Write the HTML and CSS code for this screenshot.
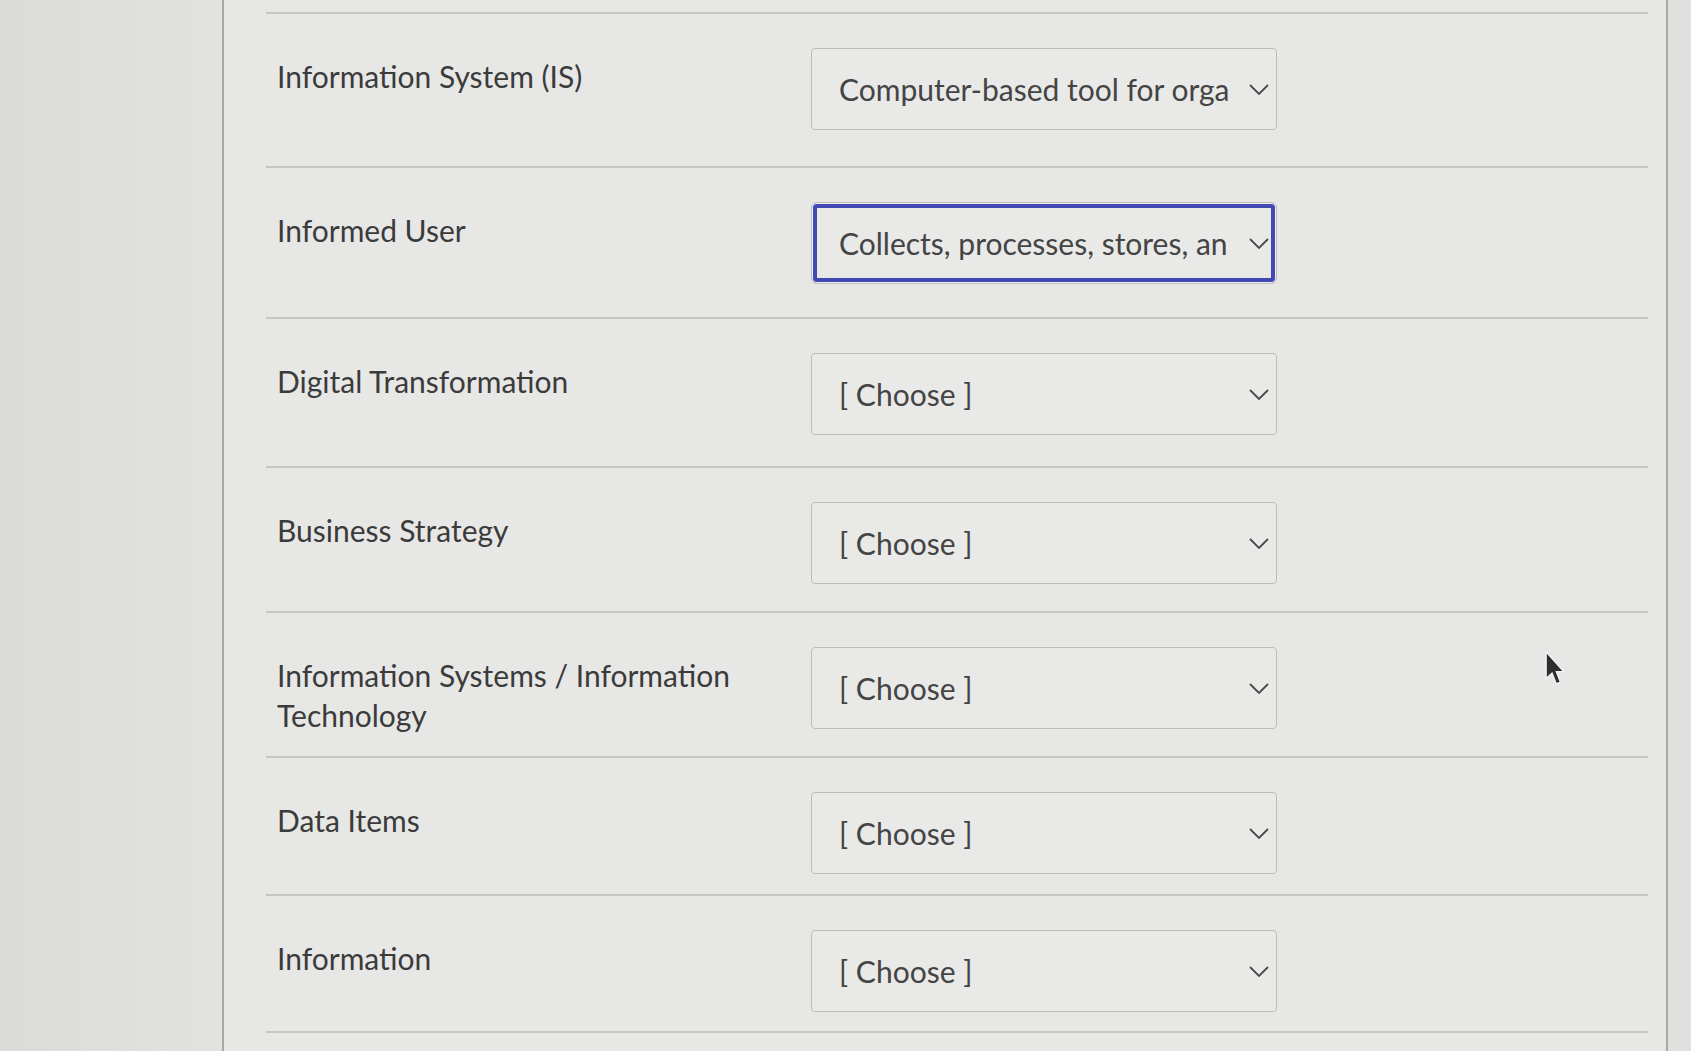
FILE: index.html
```html
<!DOCTYPE html>
<html lang="en">
<head>
<meta charset="utf-8">
<title>Matching question</title>
<link rel="stylesheet" href="styles.css">
</head>
<body>
<div class="page">
  <div class="gutter"></div>
  <main class="panel">
    <div class="list">
      <div class="row">
        <div class="label">Information System (IS)</div>
        <div class="select"><span class="value">Computer-based tool for orga</span><svg class="chev" viewBox="0 0 20 11"><path d="M1 1 L10 10 L19 1"/></svg></div>
      </div>
      <div class="row">
        <div class="label">Informed User</div>
        <div class="select focused"><span class="value">Collects, processes, stores, an</span><svg class="chev" viewBox="0 0 20 11"><path d="M1 1 L10 10 L19 1"/></svg></div>
      </div>
      <div class="row">
        <div class="label">Digital Transformation</div>
        <div class="select"><span class="value">[ Choose ]</span><svg class="chev" viewBox="0 0 20 11"><path d="M1 1 L10 10 L19 1"/></svg></div>
      </div>
      <div class="row">
        <div class="label">Business Strategy</div>
        <div class="select"><span class="value">[ Choose ]</span><svg class="chev" viewBox="0 0 20 11"><path d="M1 1 L10 10 L19 1"/></svg></div>
      </div>
      <div class="row">
        <div class="label">Information Systems / Information Technology</div>
        <div class="select"><span class="value">[ Choose ]</span><svg class="chev" viewBox="0 0 20 11"><path d="M1 1 L10 10 L19 1"/></svg></div>
      </div>
      <div class="row">
        <div class="label">Data Items</div>
        <div class="select"><span class="value">[ Choose ]</span><svg class="chev" viewBox="0 0 20 11"><path d="M1 1 L10 10 L19 1"/></svg></div>
      </div>
      <div class="row">
        <div class="label">Information</div>
        <div class="select"><span class="value">[ Choose ]</span><svg class="chev" viewBox="0 0 20 11"><path d="M1 1 L10 10 L19 1"/></svg></div>
      </div>
    </div>
    <svg class="cursor" viewBox="0 0 18 32"><path d="M1.5 1.5 L1.5 24 L6.5 19.5 L10 28.5 L13.6 27 L10.2 18.3 L16.5 18.3 Z"/></svg>
  </main>
</div>
</body>
</html>
```

FILE: styles.css
```css
html, body {
  margin: 0;
  padding: 0;
}

body {
  background: #e0e0de;
  font-family: Lato, "Open Sans", "Liberation Sans", sans-serif;
  color: #3c3c3c;
  overflow: hidden;
}

.page {
  display: flex;
  height: 1051px;
}

.gutter {
  width: 222px;
  flex: none;
  background: linear-gradient(90deg, #dbdbd9 0%, #e2e2e0 100%);
}

.panel {
  position: relative;
  width: 1446px;
  flex: none;
  background: #e7e7e5;
  border-left: 2px solid #a9a9a7;
  border-right: 2px solid #a9a9a7;
  padding: 12px 18px 0 42px;
  box-sizing: border-box;
}

.list {
  display: flex;
  flex-direction: column;
}

.row {
  display: flex;
  align-items: flex-start;
  box-sizing: border-box;
  height: 146px;
  border-top: 2px solid #c6c6c4;
  padding: 34px 0 0 11px;
}

.row:nth-child(1) { height: 154px; }
.row:nth-child(2) { height: 151px; }
.row:nth-child(3) { height: 149px; }
.row:nth-child(4) { height: 145px; }
.row:nth-child(5) { height: 145px; }
.row:nth-child(6) { height: 138px; }
.row:nth-child(7) { height: 139px; }

.row:last-child {
  border-bottom: 2px solid #c6c6c4;
}

.label {
  width: 534px;
  flex: none;
  padding: 8px 60px 0 0;
  font-size: 30px;
  line-height: 40px;
  color: #3b3b3b;
  box-sizing: border-box;
}

.select {
  width: 466px;
  height: 82px;
  box-sizing: border-box;
  border: 1px solid #bcbcba;
  border-radius: 4px;
  background: #e9e9e7;
  display: flex;
  align-items: center;
  padding: 0 7px 0 27px;
  gap: 10px;
}

.select.focused {
  box-shadow: inset 0 0 0 1px #f1f1ef, inset 0 0 0 5px #4048b4;
  border-radius: 6px;
}

.value {
  flex: 1;
  min-width: 0;
  overflow: hidden;
  white-space: nowrap;
  font-size: 30px;
  color: #444444;
}

.chev {
  width: 20px;
  height: 11px;
  flex: none;
  fill: none;
  stroke: #4a4a4a;
  stroke-width: 1.8;
}

.cursor {
  position: absolute;
  left: 1320px;
  top: 650px;
  width: 22px;
  height: 38px;
  fill: #2e2e2e;
  stroke: #f4f4f4;
  stroke-width: 1.2;
}
```
